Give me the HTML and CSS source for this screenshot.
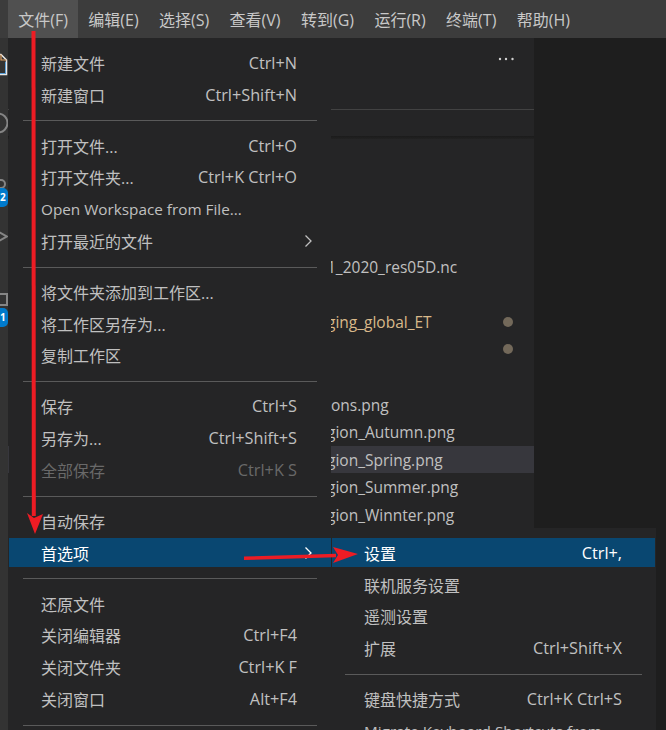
FILE: index.html
```html
<!DOCTYPE html>
<html lang="zh-CN">
<head>
<meta charset="utf-8">
<title>文件菜单</title>
<link rel="stylesheet" href="styles.css">
</head>
<body>
<div class="app">
  <nav class="menubar">
    <span class="top-item is-open">文件(F)</span>
    <span class="top-item">编辑(E)</span>
    <span class="top-item">选择(S)</span>
    <span class="top-item">查看(V)</span>
    <span class="top-item">转到(G)</span>
    <span class="top-item">运行(R)</span>
    <span class="top-item">终端(T)</span>
    <span class="top-item">帮助(H)</span>
  </nav>
  <div class="workspace">
    <aside class="activity">
      <svg class="activity-icons" width="8" height="300" viewBox="0 0 8 300" fill="none">
        <path d="M-8 16.500H1L6.500 22V36.500H-8Z" stroke="#e8e8e8" stroke-width="1.500"/>
        <path d="M1 16.500V22H6.500" stroke="#e0a060" stroke-width="1.200"/>
        <path d="M-5 35.500H5.500V24" stroke="#5aa0d8" stroke-width="1"/>
        <circle cx="-2" cy="85" r="9.500" stroke="#858585" stroke-width="2"/>
        <circle cx="1" cy="146" r="4" stroke="#858585" stroke-width="2"/>
        <path d="M-3 193L7 198.500L-3 204" stroke="#858585" stroke-width="2"/>
        <rect x="-6" y="256" width="13" height="11" stroke="#858585" stroke-width="2"/>
      </svg>
      <span class="badge badge-scm">2</span>
      <span class="badge badge-ext">1</span>
    </aside>
    <section class="explorer">
      <header class="explorer-head">
        <svg class="more" width="16" height="4" viewBox="0 0 16 4"><circle cx="2" cy="2" r="1.200"/><circle cx="8" cy="2" r="1.200"/><circle cx="14.500" cy="2" r="1.200"/></svg>
      </header>
      <div class="explorer-band"></div>
      <div class="file-list">
        <div class="file"></div>
        <div class="file"></div>
        <div class="file"></div>
        <div class="file"></div>
        <div class="file"><span class="name">1_2020_res05D.nc</span></div>
        <div class="file"></div>
        <div class="file modified"><span class="name">ging_global_ET</span><i class="dot"></i></div>
        <div class="file modified"><i class="dot"></i></div>
        <div class="file"></div>
        <div class="file"><span class="name name-ons">ons.png</span></div>
        <div class="file"><span class="name">gion_Autumn.png</span></div>
        <div class="file selected"><span class="name">gion_Spring.png</span></div>
        <div class="file"><span class="name">gion_Summer.png</span></div>
        <div class="file"><span class="name">gion_Winnter.png</span></div>
      </div>
    </section>
    <div class="editor"></div>

    <div class="menu file-menu">
      <div class="row"><span>新建文件</span><kbd>Ctrl+N</kbd></div>
      <div class="row"><span>新建窗口</span><kbd>Ctrl+Shift+N</kbd></div>
      <hr>
      <div class="row"><span>打开文件...</span><kbd>Ctrl+O</kbd></div>
      <div class="row"><span>打开文件夹...</span><kbd>Ctrl+K Ctrl+O</kbd></div>
      <div class="row"><span class="latin">Open Workspace from File...</span></div>
      <div class="row"><span>打开最近的文件</span><svg class="chev" width="9" height="14" viewBox="0 0 9 14"><path d="M1.500 1.500L7 7L1.500 12.500"/></svg></div>
      <hr>
      <div class="row"><span>将文件夹添加到工作区...</span></div>
      <div class="row"><span>将工作区另存为...</span></div>
      <div class="row"><span>复制工作区</span></div>
      <hr>
      <div class="row"><span>保存</span><kbd>Ctrl+S</kbd></div>
      <div class="row"><span>另存为...</span><kbd>Ctrl+Shift+S</kbd></div>
      <div class="row disabled"><span>全部保存</span><kbd>Ctrl+K S</kbd></div>
      <hr>
      <div class="row"><span>自动保存</span></div>
      <div class="row active"><span>首选项</span><svg class="chev" width="9" height="14" viewBox="0 0 9 14"><path d="M1.500 1.500L7 7L1.500 12.500"/></svg></div>
      <hr>
      <div class="row"><span>还原文件</span></div>
      <div class="row"><span>关闭编辑器</span><kbd>Ctrl+F4</kbd></div>
      <div class="row"><span>关闭文件夹</span><kbd>Ctrl+K F</kbd></div>
      <div class="row"><span>关闭窗口</span><kbd>Alt+F4</kbd></div>
      <hr>
    </div>

    <div class="menu sub-menu">
      <div class="row active"><span>设置</span><kbd>Ctrl+,</kbd></div>
      <div class="row"><span>联机服务设置</span></div>
      <div class="row"><span>遥测设置</span></div>
      <div class="row"><span>扩展</span><kbd>Ctrl+Shift+X</kbd></div>
      <hr>
      <div class="row"><span>键盘快捷方式</span><kbd>Ctrl+K Ctrl+S</kbd></div>
      <div class="row row-clipped"><span class="latin">Migrate Keyboard Shortcuts from...</span></div>
    </div>
  </div>

  <svg class="annotations" width="666" height="730" viewBox="0 0 666 730" fill="#ed1c24">
    <path d="M31.500 31H35.500L35.800 516H31.800Z"/>
    <path d="M27 513L34 518L43 514L35 534Z"/>
    <path d="M244 556.500L336 553.700L336 557.300L244 560Z"/>
    <path d="M333 547L358 554L333 563L338 555Z"/>
  </svg>
</div>
</body>
</html>
```
FILE: styles.css
```css
* { box-sizing: border-box; }

html, body {
  margin: 0;
  height: 100%;
  overflow: hidden;
  background: #1e1e1e;
}

.app {
  position: relative;
  display: flex;
  flex-direction: column;
  height: 730px;
  font-family: "Open Sans", "Noto Sans CJK SC", sans-serif;
  font-size: 16px;
  color: #c0c0c0;
}

.menubar {
  display: flex;
  flex: none;
  height: 38px;
  padding-left: 8px;
  background: #3c3c3c;
}

.top-item {
  display: flex;
  align-items: center;
  padding: 0 10.200px;
  color: #c8c8c8;
}

.top-item.is-open { background: #505050; }

.workspace {
  position: relative;
  display: flex;
  flex: 1;
  min-height: 0;
}

.activity {
  position: relative;
  flex: none;
  width: 8px;
  background: #333333;
  overflow: hidden;
}

.activity-icons { display: block; }

.badge {
  position: absolute;
  left: -6px;
  width: 14px;
  height: 19px;
  padding-left: 6px;
  border-radius: 5px;
  background: #007acc;
  color: #ffffff;
  font-size: 10px;
  font-weight: 700;
  line-height: 19px;
}

.badge-scm { top: 150px; }
.badge-ext { top: 270px; }

.explorer {
  flex: none;
  width: 526px;
  display: flex;
  flex-direction: column;
  background: #252526;
}

.explorer-head {
  display: flex;
  justify-content: flex-end;
  flex: none;
  height: 72px;
  padding: 19px 20px 0 0;
  border-bottom: 1px solid #424242;
}

.more { fill: #d0d0d0; }

.explorer-band {
  flex: none;
  height: 29px;
  background: linear-gradient(#252526 0 26px, #1b1b1b 26px, #222222 29px);
}

.file-list {
  padding-top: 4px;
  font-size: 15.500px;
}

.file {
  position: relative;
  height: 27.500px;
  padding-left: 319px;
  line-height: 29.500px;
  white-space: nowrap;
}

.file.selected { background: #37373d; }

.name-ons { margin-left: 4px; }

.modified { color: #d9b98a; }

.dot {
  position: absolute;
  top: 8.500px;
  left: 495px;
  width: 10px;
  height: 10px;
  border-radius: 50%;
  background: #73695a;
}

.editor {
  flex: 1;
  background: #1e1e1e;
}

.menu {
  position: absolute;
  display: flex;
  flex-direction: column;
  padding-top: 9px;
  background: #252526;
}

.file-menu {
  top: 0;
  bottom: 0;
  left: 9px;
  width: 322px;
}

.sub-menu {
  top: 490px;
  bottom: 0;
  left: 331px;
  width: 325px;
  overflow: hidden;
}

.row {
  display: flex;
  flex: none;
  align-items: center;
  justify-content: space-between;
  height: 29px;
  margin: 1.375px 0;
  padding: 0 34px 0 32px;
  white-space: nowrap;
}

.sub-menu .row {
  margin-left: 1px;
  margin-right: 1px;
  padding: 0 33px 0 32px;
}

.row.active {
  background: #094771;
  color: #ffffff;
}

.row.disabled { color: #696969; }

kbd {
  font: inherit;
  font-size: 16.250px;
}

.latin { font-size: 15.300px; }

.chev {
  fill: none;
  stroke: currentColor;
  stroke-width: 1.300;
  margin-right: -16px;
}

hr {
  flex: none;
  height: 1px;
  margin: 9.950px 14px 8.300px;
  border: 0;
  background: #5a5a5a;
}

.annotations {
  position: absolute;
  top: 0;
  left: 0;
  pointer-events: none;
}
```
